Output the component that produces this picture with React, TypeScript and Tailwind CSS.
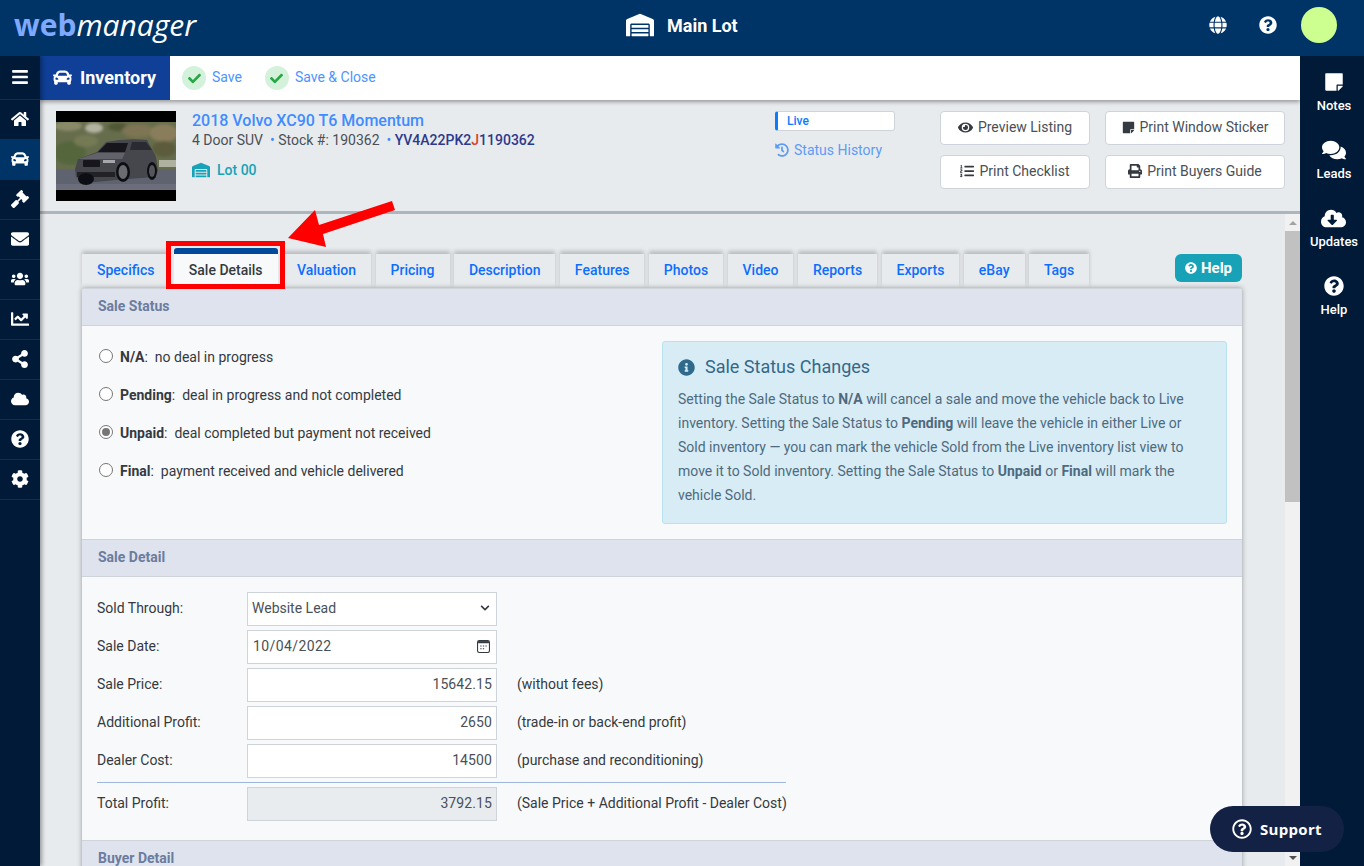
import type { ReactNode } from 'react';
import {
  FaBars, FaHome, FaCar, FaGavel, FaEnvelope, FaUsers, FaChartLine, FaShareAlt, FaCloud,
  FaQuestionCircle, FaCog, FaGlobe, FaStickyNote, FaComments, FaCloudDownloadAlt, FaEye,
  FaListOl, FaPrint, FaHistory, FaInfoCircle, FaWarehouse, FaCheck, FaRegQuestionCircle, FaChevronDown,
} from 'react-icons/fa';

const sideItems = [FaHome, FaCar, FaGavel, FaEnvelope, FaUsers, FaChartLine, FaShareAlt, FaCloud, FaQuestionCircle, FaCog];
const tabs = ['Specifics', 'Sale Details', 'Valuation', 'Pricing', 'Description', 'Features', 'Photos', 'Video', 'Reports', 'Exports', 'eBay', 'Tags'];
const radios = [
  { label: 'N/A', text: 'no deal in progress' },
  { label: 'Pending', text: 'deal in progress and not completed' },
  { label: 'Unpaid', text: 'deal completed but payment not received', checked: true },
  { label: 'Final', text: 'payment received and vehicle delivered' },
];
const rightItems = [
  { icon: FaStickyNote, label: 'Notes', size: 'text-[20px]' },
  { icon: FaComments, label: 'Leads', size: 'text-[24px]' },
  { icon: FaCloudDownloadAlt, label: 'Updates', size: 'text-[25px]' },
  { icon: FaQuestionCircle, label: 'Help', size: 'text-[20px]' },
];

// thumbnail of the car, a drawing rather than a real photo
function CarPhoto() {
  return (
    <svg viewBox="0 0 120 90" className="w-[120px] h-[90px] block shrink-0">
      <defs>
        <filter id="soft"><feGaussianBlur stdDeviation="0.4" /></filter>
        <filter id="softer"><feGaussianBlur stdDeviation="1.5" /></filter>
      </defs>
      <rect width="120" height="90" fill="#000" />
      <svg x="0" y="11" width="120" height="68" viewBox="0 11 120 68">
        <rect y="11" width="120" height="50" fill="#666d4c" />
        <g filter="url(#softer)">
          <ellipse cx="12" cy="15" rx="14" ry="5" fill="#8a8a68" />
          <ellipse cx="38" cy="17" rx="9" ry="5" fill="#b4b4a2" />
          <ellipse cx="62" cy="16" rx="10" ry="4" fill="#4f5636" />
          <ellipse cx="82" cy="20" rx="16" ry="7" fill="#7d7552" />
          <ellipse cx="108" cy="22" rx="14" ry="9" fill="#8a7d5c" />
          <ellipse cx="108" cy="38" rx="12" ry="8" fill="#5b5c3c" />
          <ellipse cx="14" cy="42" rx="16" ry="12" fill="#55663e" />
          <ellipse cx="30" cy="30" rx="12" ry="6" fill="#747a55" />
        </g>
        <rect x="103" y="49" width="17" height="7" fill="#aeb0a0" filter="url(#soft)" />
        <rect y="58" width="120" height="21" fill="#5f626f" />
        <rect y="73" width="120" height="6" fill="#6b6d7a" />
        <g filter="url(#soft)">
          <path d="M19 58 L22 48 L41 41 L50 31 Q70 27 91 29 L100 46 L102 60 L98 66 L60 69 L30 72 L20 66 Z" fill="#45464d" />
          <path d="M42 41 L51 32 L72 32 L69 41 Z" fill="#14161a" />
          <path d="M74 39 L76 31 L90 31 L96 39 Z" fill="#292b31" />
          <path d="M22 48 L41 42 L69 42 L66 48 Z" fill="#62636a" />
          <rect x="27" y="49" width="17" height="7" rx="1" fill="#17181c" />
          <rect x="47" y="49" width="12" height="3" fill="#a5a7ad" />
          <rect x="21" y="61" width="38" height="5" fill="#232428" />
          <ellipse cx="30" cy="68" rx="8" ry="6" fill="#0e0f12" />
          <ellipse cx="67" cy="61" rx="7" ry="10" fill="#0e0f12" />
          <ellipse cx="67" cy="61" rx="4.5" ry="7" fill="#6a6c72" />
          <ellipse cx="96" cy="60" rx="5" ry="9" fill="#0e0f12" />
          <ellipse cx="96" cy="60" rx="3" ry="6" fill="#55575c" />
        </g>
      </svg>
    </svg>
  );
}

function DateIcon() {
  return (
    <svg viewBox="0 0 12 12" className="w-[13px] h-[13px] mr-[1px]" fill="none">
      <rect x="0.5" y="0.5" width="11" height="11" rx="1.5" stroke="#343a40" />
      <rect x="1" y="1" width="10" height="2" fill="#343a40" />
      <path d="M3 5.5h1.2M5.4 5.5h1.2M7.8 5.5h1.2M3 8h1.2M5.4 8h1.2" stroke="#343a40" />
    </svg>
  );
}

function OutlineButton({ w, icon, children }: { w: string; icon: ReactNode; children: ReactNode }) {
  return (
    <button className={`${w} h-[34px] pb-[2px] flex items-center justify-center gap-[5px] bg-white border border-[#ced4da] rounded-[4px] text-sm text-[#495057]`}>
      {icon}
      {children}
    </button>
  );
}

function SectionHeader({ title }: { title: string }) {
  return (
    <div className="h-[38px] pb-[3px] flex items-center pl-[16px] bg-[#dee3ed] border-y border-[#ced4da] text-sm font-bold text-[#6b7c9f]">
      {title}
    </div>
  );
}

function Field({ label, value, note, disabled }: { label: string; value: string; note?: string; disabled?: boolean }) {
  return (
    <div className="flex items-center h-[34px]">
      <div className="w-[150px] shrink-0 text-sm text-[#343a40] -mt-[2px]">{label}</div>
      <div className={`w-[250px] shrink-0 h-[34px] pb-[2px] flex items-center justify-end pr-[4px] border border-[#ced4da] text-sm tracking-[0.1px] text-[#495057] ${disabled ? 'bg-[#e9ecef]' : 'bg-white'}`}>
        {value}
      </div>
      {note && <div className="ml-[20px] text-sm whitespace-nowrap text-[#343a40] -mt-[2px]">{note}</div>}
    </div>
  );
}

export default function App() {
  return (
    <div className="relative h-[866px] w-[1364px] overflow-hidden flex flex-col font-['Roboto',sans-serif] bg-[#e8ebee]">
      {/* top bar */}
      <header className="h-[56px] shrink-0 flex items-center pb-[6px] bg-[#003366] relative z-20">
        <div className="w-[520px] pl-[14px] font-['Open_Sans',sans-serif] text-[30px] leading-none text-white -mt-[1px]">
          <span className="font-bold text-[#7fa8ff]">web</span>
          <span className="italic">manager</span>
        </div>
        <div className="flex-1 flex items-center gap-[13px] pl-[106px] text-white">
          <FaWarehouse className="text-[28px]" />
          <span className="text-lg font-bold mt-[2px]">Main Lot</span>
        </div>
        <FaGlobe className="text-white text-[18px] mr-[32px]" />
        <FaQuestionCircle className="text-white text-[18px] mr-[24px]" />
        <div className="w-[36px] h-[36px] rounded-full bg-[#ccff90] mr-[27px]" />
      </header>

      <div className="flex-1 flex min-h-0">
        {/* left nav */}
        <nav className="w-[40px] shrink-0 bg-[#001a38] text-white z-10 shadow-[2px_0_4px_rgba(0,0,0,0.35)]">
          <div className="h-[44px] pb-[2px] flex items-center justify-center border-b border-[#003366]">
            <FaBars className="text-[18px]" />
          </div>
          {sideItems.map((Icon, i) => (
            <div key={i} className={`h-[40px] pb-[2px] flex items-center justify-center border-b border-[#003366] ${i === 1 ? 'bg-[#003366]' : ''}`}>
              <Icon className="text-[18px]" />
            </div>
          ))}
        </nav>

        <div className="flex-1 flex flex-col min-w-0">
          {/* toolbar */}
          <div className="h-[44px] shrink-0 flex items-center bg-white shadow-[0_2px_4px_rgba(0,0,0,0.35)] z-[5]">
            <div className="w-[130px] h-full pb-[2px] flex items-center gap-[8px] pl-[13px] bg-[#0f3f96] text-white">
              <FaCar className="text-[19px]" />
              <span className="text-[18px] font-bold">Inventory</span>
            </div>
            <div className="flex items-center gap-[6px] ml-[12px]">
              <span className="w-[24px] h-[24px] rounded-full bg-[#d4f2db] flex items-center justify-center">
                <FaCheck className="text-[#28a745] text-[13px]" />
              </span>
              <span className="text-sm text-[#4d94ff] -mt-[2px]">Save</span>
            </div>
            <div className="flex items-center gap-[6px] ml-[23px]">
              <span className="w-[24px] h-[24px] rounded-full bg-[#d4f2db] flex items-center justify-center">
                <FaCheck className="text-[#28a745] text-[13px]" />
              </span>
              <span className="text-sm text-[#4d94ff] -mt-[2px]">Save &amp; Close</span>
            </div>
          </div>

          {/* vehicle header */}
          <div className="h-[114px] shrink-0 flex pt-[11px] pl-[16px] bg-[#e8ebee] border-b-[3px] border-[#adb5bd]">
            <CarPhoto />
            <div className="w-[599px] pl-[16px]">
              <div className="pt-[1px] text-base leading-[18px] font-medium text-[#3f8cff]">2018 Volvo XC90 T6 Momentum</div>
              <div className="text-sm leading-[20px] text-[#495057]">
                4 Door SUV <span className="text-[#3f8cff]">&nbsp;•&nbsp;</span>Stock #: 190362 <span className="text-[#3f8cff]">&nbsp;•&nbsp;</span>
                <span className="font-medium text-[#2d3a8c]">YV4A22PK2<span className="text-[#d9412b]">J</span>1190362</span>
              </div>
              <div className="mt-[10px] flex items-center gap-[7px] text-sm font-medium text-[#17a2b8]">
                <FaWarehouse className="text-[18px]" />
                Lot 00
              </div>
            </div>
            <div className="w-[165px]">
              <div className="w-[120px] h-[20px] flex items-center pl-[9px] bg-white border border-[#ced4da] border-l-[3px] border-l-[#0d7bff] rounded-[3px] text-xs font-medium text-[#0d7bff]">
                Live
              </div>
              <div className="mt-[9px] flex items-center gap-[5px] text-sm text-[#5c9cf5]">
                <FaHistory className="text-[14px]" />
                Status History
              </div>
            </div>
            <div className="grid grid-cols-[150px_180px] gap-x-[15px] gap-y-[10px] content-start">
              <OutlineButton w="w-[150px]" icon={<FaEye className="text-[15px] text-[#343a40]" />}>Preview Listing</OutlineButton>
              <OutlineButton w="w-[180px]" icon={<FaStickyNote className="text-[13px] text-[#343a40]" />}>Print Window Sticker</OutlineButton>
              <OutlineButton w="w-[150px]" icon={<FaListOl className="text-[14px] text-[#343a40]" />}>Print Checklist</OutlineButton>
              <OutlineButton w="w-[180px]" icon={<FaPrint className="text-[14px] text-[#343a40]" />}>Print Buyers Guide</OutlineButton>
            </div>
          </div>

          {/* scrolling content */}
          <div className="flex-1 flex min-h-0">
            <main className="flex-1 min-w-0 overflow-hidden pl-[42px] pr-[43px] pt-[40px]">
              <div className="flex items-start h-[34px]">
                {tabs.map((t) => (
                  t === 'Sale Details' ? (
                    <div key={t} className="relative z-[3] h-[40px] -mt-[6px] mr-[4.4px] px-[15px] pb-[2px] flex items-center bg-[#f8f9fb] border-t-[6px] border-[#004a99] rounded-t-[3px] text-sm font-medium text-[#343a40]">
                      {t}
                    </div>
                  ) : (
                    <div key={t} className="h-[34px] mr-[4.4px] px-[15px] pb-[2px] flex items-center bg-[#e8ebee] shadow-[0_-3px_4px_rgba(0,0,0,0.2)] text-sm font-medium text-[#0d6efd]">
                      {t}
                    </div>
                  )
                ))}
                <div className="ml-auto h-[28px] w-[67px] flex items-center justify-center gap-[4px] bg-[#17a2b8] rounded-[6px] text-white text-[15px] font-bold">
                  <FaQuestionCircle className="text-[12px]" />
                  Help
                </div>
              </div>
              <div className="relative bg-[#f8f9fb] shadow-[0_0_5px_rgba(0,0,0,0.35)]">
                <SectionHeader title="Sale Status" />
                <div className="h-[213px] flex">
                  <div className="w-[580px] pl-[17px] pt-[12px]">
                    {radios.map((r) => (
                      <div key={r.label} className="h-[38px] flex items-center text-sm text-[#343a40]">
                        <span className="w-[14px] h-[14px] mr-[7px] -mt-[2px] rounded-full border border-[#767676] bg-white flex items-center justify-center">
                          {r.checked && <span className="w-[8px] h-[8px] rounded-full bg-[#767676]" />}
                        </span>
                        <span className="whitespace-pre"><b className="font-bold">{r.label}</b>:  {r.text}</span>
                      </div>
                    ))}
                  </div>
                  <div className="w-[565px] h-[183px] mt-[15px] px-[15px] pt-[13px] bg-[#d8ecf5] border border-[#b8e2f0] rounded-[3px] text-[#4d6a80]">
                    <div className="flex items-center gap-[10px] text-lg leading-[24px] font-normal text-[#34688a]">
                      <FaInfoCircle className="text-[17px] text-[#2f6a8c]" />
                      Sale Status Changes
                    </div>
                    <p className="mt-[8px] text-sm leading-[24px]">
                      Setting the Sale Status to <b>N/A</b> will cancel a sale and move the vehicle back to Live inventory. Setting the Sale Status to <b>Pending</b> will leave the vehicle in either Live or Sold inventory — you can mark the vehicle Sold from the Live inventory list view to move it to Sold inventory. Setting the Sale Status to <b>Unpaid</b> or <b>Final</b> will mark the vehicle Sold.
                    </p>
                  </div>
                </div>
                <SectionHeader title="Sale Detail" />
                <div className="h-[263px] pl-[15px] pt-[15px]">
                  <div className="w-[689px] flex flex-col gap-[4px]">
                    <div className="flex items-center h-[34px]">
                      <div className="w-[150px] text-sm text-[#343a40] -mt-[2px]">Sold Through:</div>
                      <div className="w-[250px] h-[34px] pb-[2px] flex items-center justify-between px-[4px] bg-white border border-[#ced4da] text-sm text-[#495057]">
                        Website Lead
                        <FaChevronDown className="text-[10px] text-[#343a40] mr-[2px]" />
                      </div>
                    </div>
                    <div className="flex items-center h-[34px]">
                      <div className="w-[150px] text-sm text-[#343a40] -mt-[2px]">Sale Date:</div>
                      <div className="w-[250px] h-[34px] pb-[2px] flex items-center justify-between px-[5px] bg-white border border-[#ced4da] text-sm tracking-[0.4px] text-[#495057]">
                        10/04/2022
                        <DateIcon />
                      </div>
                    </div>
                    <Field label="Sale Price:" value="15642.15" note="(without fees)" />
                    <Field label="Additional Profit:" value="2650" note="(trade-in or back-end profit)" />
                    <Field label="Dealer Cost:" value="14500" note="(purchase and reconditioning)" />
                    <div className="border-t border-[#9db8dc] pt-[4px]">
                      <Field label="Total Profit:" value="3792.15" note="(Sale Price + Additional Profit - Dealer Cost)" disabled />
                    </div>
                  </div>
                </div>
                <SectionHeader title="Buyer Detail" />
              </div>
            </main>
            {/* scrollbar */}
            <div className="w-[15px] shrink-0 flex flex-col bg-[#f1f1f1]">
              <div className="h-[17px] flex items-center justify-center">
                <span className="w-0 h-0 border-x-[4px] border-x-transparent border-b-[4px] border-b-[#a3a3a3]" />
              </div>
              <div className="h-[271px] bg-[#c1c1c1]" />
              <div className="flex-1" />
              <div className="h-[17px] flex items-center justify-center">
                <span className="w-0 h-0 border-x-[4px] border-x-transparent border-t-[4px] border-t-[#505050]" />
              </div>
            </div>
          </div>
        </div>

        {/* right nav */}
        <aside className="w-[64px] shrink-0 bg-[#001a38] text-white flex flex-col items-center pt-[14px] pl-[4px] z-10">
          {rightItems.map(({ icon: Icon, label, size }) => (
            <div key={label} className="h-[68px] flex flex-col items-center">
              <div className="h-[24px] flex items-center justify-center">
                <Icon className={size} />
              </div>
              <span className="mt-[4px] text-[13px] leading-[16px] font-medium">{label}</span>
            </div>
          ))}
        </aside>
      </div>

      {/* annotation */}
      <div className="absolute left-[166px] top-[241px] w-[119px] h-[48px] border-[5px] border-[#ff0000] z-30" />
      <svg className="absolute left-[285px] top-[198px] z-30" width="112" height="52" viewBox="0 0 112 52">
        <path d="M3 40 L30 12 L34 27 L107 3 L110 12 L38 36 L41 49 Z" fill="#ff0000" />
      </svg>

      {/* support pill */}
      <div className="absolute left-[1210px] top-[806px] w-[134px] h-[46px] flex items-center gap-[8px] pl-[22px] rounded-full bg-[#132244] text-white font-['Open_Sans',sans-serif] text-[15px] tracking-[0.3px] font-bold z-30">
        <FaRegQuestionCircle className="text-[20px]" />
        Support
      </div>
    </div>
  );
}
